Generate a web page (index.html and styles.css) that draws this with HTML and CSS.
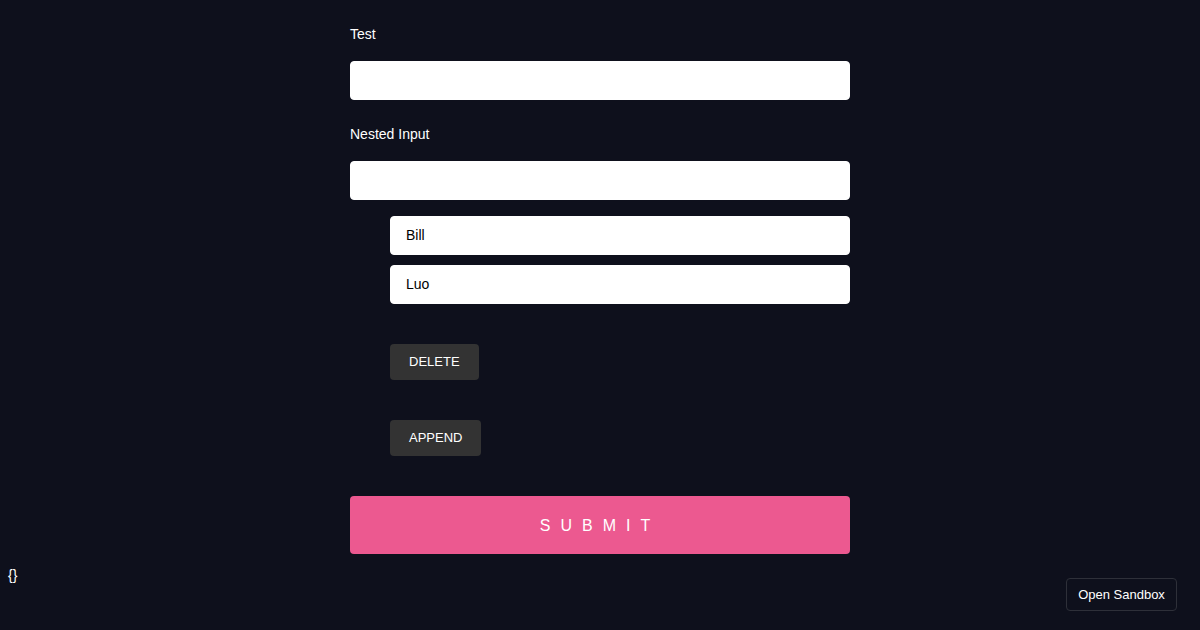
FILE: index.html
```html
<!DOCTYPE html>
<html>
<head>
<meta charset="utf-8">
<link rel="stylesheet" href="styles.css">
</head>
<body>
<form class="form">
  <label class="label">Test</label>
  <input class="field" type="text">
  <label class="label">Nested Input</label>
  <input class="field" type="text">
  <div class="nested">
    <input class="field" type="text" value="Bill">
    <input class="field" type="text" value="Luo">
    <button class="btn" type="button">Delete</button>
    <button class="btn" type="button">Append</button>
  </div>
  <button class="submit" type="button">Submit</button>
</form>
<div class="json">{}</div>
<button class="sandbox" type="button">Open Sandbox</button>
</body>
</html>
```
FILE: styles.css
```css
html, body {
  margin: 0;
  padding: 0;
  background: #0e101c;
  color: #fff;
  font-family: "Liberation Sans", Arial, sans-serif;
  height: 100%;
}
body {
  padding: 0 8px;
  box-sizing: border-box;
}
.form {
  display: block;
  width: 500px;
  margin: 0 auto;
  padding-top: 20px;
}
.label {
  display: block;
  font-size: 14px;
  line-height: 28px;
  margin: 0 0 13px;
  color: #fff;
}
.form > .field + .label {
  margin-top: 20px;
}
.field {
  display: block;
  box-sizing: border-box;
  width: 100%;
  height: 39px;
  border: 1px solid #fff;
  border-radius: 4px;
  background: #fff;
  padding: 9px 15px 11px;
  margin: 0;
  font-size: 14px;
  font-family: "Liberation Sans", Arial, sans-serif;
  color: #000;
}
.nested {
  margin: 16px 0 0 40px;
  display: flex;
  flex-direction: column;
  align-items: flex-start;
}
.nested .field + .field {
  margin-top: 10px;
}
.btn {
  display: block;
  box-sizing: border-box;
  height: 36px;
  margin-top: 40px;
  background: #333;
  color: #fff;
  border: none;
  border-radius: 4px;
  padding: 0 19px 1px;
  font-size: 13px;
  line-height: 16px;
  text-transform: uppercase;
  font-family: "Liberation Sans", Arial, sans-serif;
}
.submit {
  display: block;
  width: 100%;
  height: 58px;
  margin-top: 40px;
  padding: 1px 0 0;
  background: #ec5990;
  color: #fff;
  border: none;
  border-radius: 4px;
  font-size: 16px;
  font-weight: 100;
  letter-spacing: 10px;
  text-transform: uppercase;
  font-family: "Liberation Sans", Arial, sans-serif;
}
.json {
  margin-top: 10px;
  font-size: 14px;
  line-height: 22px;
}
.sandbox {
  position: fixed;
  right: 23px;
  bottom: 19px;
  width: 111px;
  height: 33px;
  background: #0e101c;
  color: #fff;
  border: 1px solid #2e3039;
  border-radius: 4px;
  font-size: 13px;
  font-family: "Liberation Sans", Arial, sans-serif;
  padding: 0;
}
```
